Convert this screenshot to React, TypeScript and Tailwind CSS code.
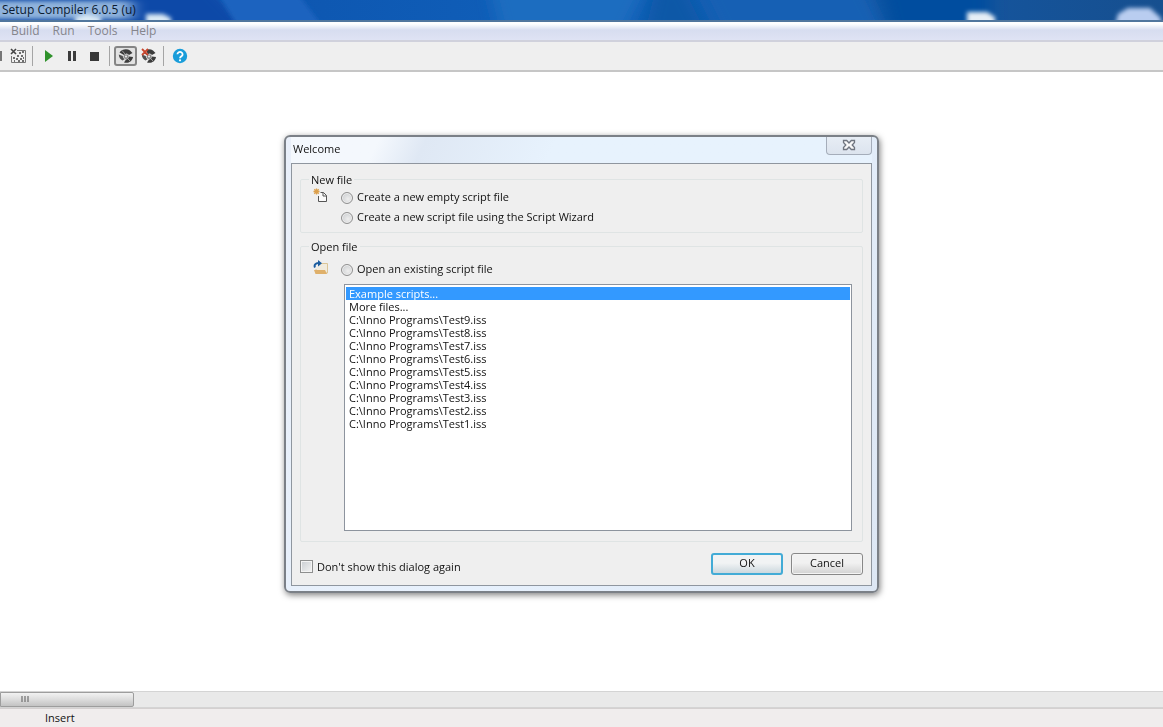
import { useState } from 'react';
import type { ReactNode } from 'react';

const menuItems = ['Build', 'Run', 'Tools', 'Help'];

const files = [
  'Example scripts...',
  'More files...',
  'C:\\Inno Programs\\Test9.iss',
  'C:\\Inno Programs\\Test8.iss',
  'C:\\Inno Programs\\Test7.iss',
  'C:\\Inno Programs\\Test6.iss',
  'C:\\Inno Programs\\Test5.iss',
  'C:\\Inno Programs\\Test4.iss',
  'C:\\Inno Programs\\Test3.iss',
  'C:\\Inno Programs\\Test2.iss',
  'C:\\Inno Programs\\Test1.iss',
];

function CompileIcon() {
  return (
    <svg width="16" height="16" viewBox="0 0 16 16" fill="none" stroke="#444">
      <path d="M7 2.5H15.5V14.5H1.5V8" stroke="#777" />
      <path d="M1 1l5 5M6 1L1 6" strokeWidth="1.6" />
      <path d="M9 5h2M12 4h2M7 8h2M11 8h2M3 10h2M6 11h2M10 11h2M13 10h1M4 13h1M8 13h2M12 13h2" strokeWidth="1.6" />
    </svg>
  );
}

function DiscIcon({ crossed = false }: { crossed?: boolean }) {
  return (
    <svg width="16" height="16" viewBox="0 0 16 16" fill="none">
      <path d="M1.500 4.500C4 1 9 .5 12 2.500L14.500 5 11 7C9.500 5 8 5 6 7z" fill="#3c3c3c" />
      <path d="M.8 6.500l4 1.500c0 1.500.7 2.500 2 3L4.500 12.500C2.500 11.500.8 9.500.8 6.500z" fill="#505050" />
      <path d="M15 9c-.5 4-4.500 6.800-9 5.500l2-3c1.500 0 2.800-1 3-3z" fill="#3c3c3c" />
      <path d="M6 6.500l4 0 1 3-3 2-2.500-2z" fill="#8a8a8a" />
      <circle cx="8" cy="8.500" r="1" fill="#eee" />
      <path d="M4 2.500l3 3.500M9.500 10.500l3 3" stroke="#9a9a9a" />
      {crossed && (
        <>
          <path d="M0 0h6v5H0z" fill="#efefef" />
          <path d="M1 1l6 6M7 1L1 7" stroke="#c8452c" strokeWidth="1.8" />
        </>
      )}
    </svg>
  );
}

function ToolButton({ label, pressed, children }: { label: string; pressed?: boolean; children: ReactNode }) {
  return (
    <button
      aria-label={label}
      aria-pressed={pressed}
      className={
        pressed
          ? 'flex h-5 w-[23px] items-center justify-center rounded-[3px] border-2 border-[#858585] bg-[#e2e2e2]'
          : 'flex h-5 w-[23px] items-center justify-center'
      }
    >
      {children}
    </button>
  );
}

function Separator() {
  return <span className="mr-1 ml-[3px] h-5 w-px bg-[#a5a5a5]" />;
}

function TitleBar() {
  return (
    <header className="relative h-[22px] overflow-hidden border-b-2 border-[#52779d] bg-linear-to-r from-[#0c4ea8] via-[#1060ba] to-[#164f8f]">
      <svg className="absolute inset-0 h-full w-full" viewBox="0 0 1163 20" preserveAspectRatio="none">
        <defs>
          <filter id="soft" filterUnits="userSpaceOnUse" x="-40" y="-40" width="1240" height="100">
            <feGaussianBlur stdDeviation="8 2" />
          </filter>
          <filter id="cloud" filterUnits="userSpaceOnUse" x="-40" y="-40" width="1240" height="100">
            <feGaussianBlur stdDeviation="2" />
          </filter>
        </defs>
        <path d="M-20-10h230l40 40H-20z" fill="#0a49a8" filter="url(#soft)" />
        <path d="M215-10h80l30 40h-85z" fill="#1c63bf" filter="url(#cloud)" />
        <path d="M490-10h155l-20 40H500z" fill="#1f6dc0" filter="url(#soft)" />
        <path d="M655-10h30l20 40h-60z" fill="#0758a7" filter="url(#soft)" />
        <path d="M700-10h165l20 40H720z" fill="#1860b4" filter="url(#soft)" />
        <path d="M880-10h110v40H890z" fill="#064d9f" filter="url(#soft)" />
        <rect x="-20" y="1" width="152" height="18" fill="#8fb2dc" filter="url(#soft)" />
        <path d="M75 24V17l12-3 14 3v7zM146 24V14h17l8 4v6z" fill="#dcebf6" filter="url(#cloud)" />
        <path d="M967 26V12h20l8 5v9z" fill="#e6eef6" filter="url(#cloud)" />
        <path d="M1115 26l3-12 10-6h22l11 10v8z" fill="#b9cdf0" filter="url(#cloud)" />
      </svg>
      <h1 className="relative pl-0.5 text-[12px] leading-5 text-[#0a1a30]">Setup Compiler 6.0.5 (u)</h1>
    </header>
  );
}

function Toolbar() {
  return (
    <div className="flex h-[30px] items-center border-b-2 border-[#c6c6c6] bg-[#efefef]">
      <span className="h-2.5 w-0.5 bg-[#777]" />
      <div className="flex items-center pl-1">
        <ToolButton label="Compile">
          <CompileIcon />
        </ToolButton>
        <Separator />
        <ToolButton label="Run">
          <svg width="10" height="12" viewBox="0 0 10 12">
            <path d="M1 0l8 6-8 6z" fill="#2f922b" />
          </svg>
        </ToolButton>
        <ToolButton label="Pause">
          <svg width="10" height="10" viewBox="0 0 10 10">
            <path d="M1 0h3v10H1zM6 0h3v10H6z" fill="#3c3c3c" />
          </svg>
        </ToolButton>
        <ToolButton label="Terminate">
          <svg width="9" height="9" viewBox="0 0 9 9">
            <path d="M0 0h9v9H0z" fill="#383838" />
          </svg>
        </ToolButton>
        <Separator />
        <ToolButton label="Target Setup" pressed>
          <DiscIcon />
        </ToolButton>
        <ToolButton label="Target Uninstall">
          <DiscIcon crossed />
        </ToolButton>
        <Separator />
        <ToolButton label="Help">
          <svg width="16" height="16" viewBox="0 0 16 16">
            <circle cx="8" cy="8" r="7.2" fill="#199dda" />
            <path d="M5.4 6.2a2.6 2.4 0 1 1 4 2.1C8.4 9 8 9.300 8 10.200" fill="none" stroke="#fff" strokeWidth="1.8" />
            <circle cx="8" cy="12.300" r="1.100" fill="#fff" />
          </svg>
        </ToolButton>
      </div>
    </div>
  );
}

function NewFileIcon() {
  return (
    <svg width="16" height="16" viewBox="0 0 16 16" fill="none">
      <path d="M3.500 .5v6M.5 3.500h6M1.300 1.300l4.400 4.400M5.700 1.300L1.300 5.700" stroke="#dca04c" strokeWidth="1.300" />
      <path d="M7.500 4.500h3l3 3v6H5.500V8" fill="#fafafa" stroke="#555" />
      <path d="M10 4.500V8h3.500" stroke="#555" />
    </svg>
  );
}

function OpenFileIcon() {
  return (
    <svg width="16" height="16" viewBox="0 0 16 16" fill="none">
      <path d="M8 3.500h6.500V13H3V9" fill="#f1ebdd" stroke="#dcc596" />
      <path d="M1 10h11l2 4H2.500z" fill="#dfb06a" />
      <path d="M2 7.500C.8 5 2.500 3 5.500 3" stroke="#1b5c9f" strokeWidth="2" />
      <path d="M5 0l4 3.200L5 6.500z" fill="#1b5c9f" />
    </svg>
  );
}

function RadioOption({ id, label, value, onSelect }: { id: string; label: string; value: string; onSelect: (id: string) => void }) {
  return (
    <label className="flex h-5 items-center gap-1">
      <input
        type="radio"
        name="action"
        checked={value === id}
        onChange={() => onSelect(id)}
        className="size-3 appearance-none rounded-full border border-[#909090] bg-radial-[at_60%_60%] from-[#eeeeee] to-[#c4c7ca] shadow-[inset_0_0_0_1px_#f0f0f0] checked:from-[#1c5f96]"
      />
      {label}
    </label>
  );
}

function WelcomeDialog() {
  const [action, setAction] = useState('');
  const [file, setFile] = useState(files[0]);
  const [hidden, setHidden] = useState(false);

  return (
    <div
      role="dialog"
      aria-labelledby="welcome-title"
      className="w-[595px] max-w-full rounded-md border-2 border-[#7b8087] bg-linear-115 from-[#e9eff9] via-[#e7f1fd] to-[#dde7f4] px-[5px] pb-[5px] font-medium shadow-[1px_2px_6px_rgba(0,0,0,0.5)]"
    >
      <div className="flex h-[26px] items-start justify-between bg-linear-115 from-[#f4f8fd] from-15% via-[#dfe8f4] via-23% to-[#e7f2fd] to-45%">
        <h2 id="welcome-title" className="pt-1 pl-0.5 leading-4">Welcome</h2>
        <button
          aria-label="Close"
          className="flex h-[18px] w-[46px] items-center justify-center rounded-b border border-t-0 border-[#a5adba] bg-linear-to-b from-[#e7edf5] to-[#dce4ee]"
        >
          <svg width="14" height="12" viewBox="0 0 14 12">
            <path d="M1.500 1.500h3.200L7 4l2.300-2.500h3.200v2L10.200 6l2.300 2.500v2H9.300L7 8l-2.300 2.500H1.500v-2L3.800 6 1.500 3.500z" fill="#f8f8f8" stroke="#70757f" strokeWidth="1.300" />
          </svg>
        </button>
      </div>

      <div className="border border-[#8f969f] bg-[#efefef] px-2 pt-2 pb-2.5">
        <fieldset className="rounded-xs border border-[#dfe4e4] px-2 pb-1">
          <legend className="px-0.5 leading-4">New file</legend>
          <div className="flex gap-3 pl-1">
            <NewFileIcon />
            <div>
              <RadioOption id="empty" label="Create a new empty script file" value={action} onSelect={setAction} />
              <RadioOption id="wizard" label="Create a new script file using the Script Wizard" value={action} onSelect={setAction} />
            </div>
          </div>
        </fieldset>

        <fieldset className="mt-1.5 rounded-xs border border-[#dfe4e4] px-2 pb-2.5">
          <legend className="px-0.5 leading-4">Open file</legend>
          <div className="flex gap-3 pt-[5px] pl-1">
            <OpenFileIcon />
            <RadioOption id="open" label="Open an existing script file" value={action} onSelect={setAction} />
          </div>
          <select
            size={11}
            aria-label="Script files"
            value={file}
            onChange={e => setFile(e.target.value)}
            className="mt-1 ml-[35px] block h-[247px] w-[508px] max-w-full border border-[#8d949e] bg-white px-px pt-0.5 font-normal"
          >
            {files.map(name => (
              <option
                key={name}
                value={name}
                className="flex h-[13px] min-h-0 items-center px-[3px] py-0 text-[11px] checked:bg-[#3399ff] checked:bg-linear-to-r checked:from-[#3399ff] checked:to-[#3399ff] checked:[-webkit-text-fill-color:white]"
              >
                {name}
              </option>
            ))}
          </select>
        </fieldset>

        <div className="mt-[11px] flex items-start justify-between">
          <label className="flex items-center gap-1 pt-1.5 leading-4">
            <input
              type="checkbox"
              checked={hidden}
              onChange={e => setHidden(e.target.checked)}
              className="size-[13px] appearance-none border border-[#8e8f8f] bg-linear-135 from-[#c9cdd1] to-[#f4f4f4] shadow-[inset_0_0_0_1px_#f4f4f4] checked:from-[#1c5f96]"
            />
            Don't show this dialog again
          </label>
          <div className="flex gap-2">
            <button className="h-[22px] w-[72px] rounded-[3px] border-2 border-[#42abd6] bg-linear-to-b from-[#f1f3f4] from-45% to-[#ccd8de]">OK</button>
            <button className="h-[22px] w-[72px] rounded-[3px] border border-[#888] bg-linear-to-b from-[#f1f1f1] from-45% to-[#d2d2d2] shadow-[inset_0_0_0_1px_#f4f4f4]">Cancel</button>
          </div>
        </div>
      </div>
    </div>
  );
}

export default function App() {
  return (
    <div className="flex min-h-screen flex-col bg-white font-['Open_Sans','Noto_Sans',sans-serif] text-[11px] text-[#111]">
      <TitleBar />
      <nav className="flex h-5 items-center gap-[13px] border-b-2 border-[#d0d1dc] bg-linear-to-b from-white from-10% via-[#d7ddf0] via-45% to-[#dfe3f4] pl-[11px] text-[12px] text-[#85858c]">
        {menuItems.map(item => (
          <button key={item}>{item}</button>
        ))}
      </nav>
      <Toolbar />
      <main className="flex-1 bg-white" />
      <div className="h-[17px] border-y border-[#d4d4d4] bg-[#e9e9e9]">
        <div className="flex h-full w-[134px] items-start justify-center rounded-r-xs border border-[#9d9d9d] bg-linear-to-b from-[#f2f2f2] via-[#dcdcdc] to-[#c3c3c3] pr-[84px] pt-[3px]">
          <svg width="8" height="7" viewBox="0 0 8 7">
            <path d="M1 0v6M4 0v6M7 0v6" stroke="#777" strokeWidth="1.300" />
          </svg>
        </div>
      </div>
      <footer className="h-[19px] border-t border-[#d4d0d0] bg-[#f0eded] pl-[45px] leading-[18px] font-medium">Insert</footer>

      <div className="fixed inset-0 flex items-center justify-center">
        <WelcomeDialog />
      </div>
    </div>
  );
}
